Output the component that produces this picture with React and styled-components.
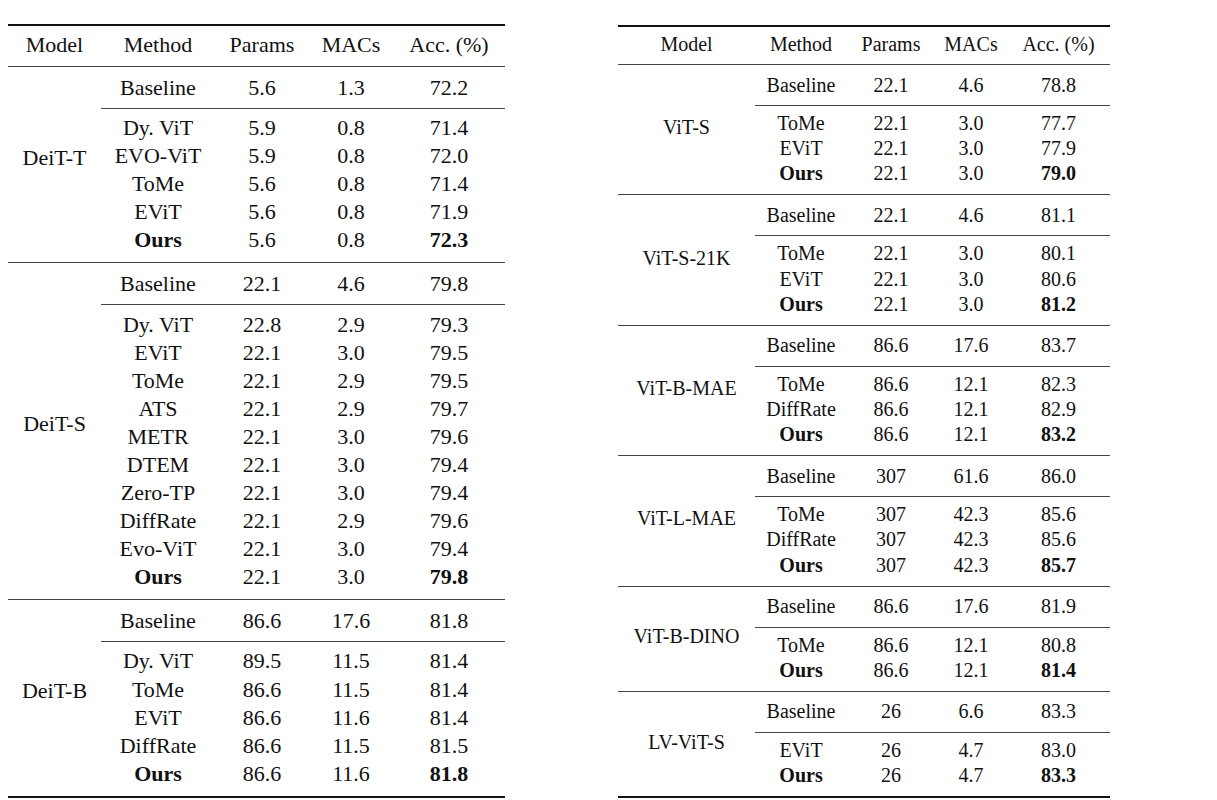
import React from 'react'
import styled, { createGlobalStyle } from 'styled-components'

const GlobalStyle = createGlobalStyle`
    body {
        margin: 0;
        background: #fff;
    }
`

const leftData = [
    {
        model: 'DeiT-T',
        base: ['Baseline', '5.6', '1.3', '72.2'],
        rows: [
            ['Dy. ViT', '5.9', '0.8', '71.4'],
            ['EVO-ViT', '5.9', '0.8', '72.0'],
            ['ToMe', '5.6', '0.8', '71.4'],
            ['EViT', '5.6', '0.8', '71.9'],
            ['Ours', '5.6', '0.8', '72.3'],
        ],
    },
    {
        model: 'DeiT-S',
        base: ['Baseline', '22.1', '4.6', '79.8'],
        rows: [
            ['Dy. ViT', '22.8', '2.9', '79.3'],
            ['EViT', '22.1', '3.0', '79.5'],
            ['ToMe', '22.1', '2.9', '79.5'],
            ['ATS', '22.1', '2.9', '79.7'],
            ['METR', '22.1', '3.0', '79.6'],
            ['DTEM', '22.1', '3.0', '79.4'],
            ['Zero-TP', '22.1', '3.0', '79.4'],
            ['DiffRate', '22.1', '2.9', '79.6'],
            ['Evo-ViT', '22.1', '3.0', '79.4'],
            ['Ours', '22.1', '3.0', '79.8'],
        ],
    },
    {
        model: 'DeiT-B',
        base: ['Baseline', '86.6', '17.6', '81.8'],
        rows: [
            ['Dy. ViT', '89.5', '11.5', '81.4'],
            ['ToMe', '86.6', '11.5', '81.4'],
            ['EViT', '86.6', '11.6', '81.4'],
            ['DiffRate', '86.6', '11.5', '81.5'],
            ['Ours', '86.6', '11.6', '81.8'],
        ],
    },
]

const rightData = [
    {
        model: 'ViT-S',
        base: ['Baseline', '22.1', '4.6', '78.8'],
        rows: [
            ['ToMe', '22.1', '3.0', '77.7'],
            ['EViT', '22.1', '3.0', '77.9'],
            ['Ours', '22.1', '3.0', '79.0'],
        ],
    },
    {
        model: 'ViT-S-21K',
        base: ['Baseline', '22.1', '4.6', '81.1'],
        rows: [
            ['ToMe', '22.1', '3.0', '80.1'],
            ['EViT', '22.1', '3.0', '80.6'],
            ['Ours', '22.1', '3.0', '81.2'],
        ],
    },
    {
        model: 'ViT-B-MAE',
        base: ['Baseline', '86.6', '17.6', '83.7'],
        rows: [
            ['ToMe', '86.6', '12.1', '82.3'],
            ['DiffRate', '86.6', '12.1', '82.9'],
            ['Ours', '86.6', '12.1', '83.2'],
        ],
    },
    {
        model: 'ViT-L-MAE',
        base: ['Baseline', '307', '61.6', '86.0'],
        rows: [
            ['ToMe', '307', '42.3', '85.6'],
            ['DiffRate', '307', '42.3', '85.6'],
            ['Ours', '307', '42.3', '85.7'],
        ],
    },
    {
        model: 'ViT-B-DINO',
        base: ['Baseline', '86.6', '17.6', '81.9'],
        rows: [
            ['ToMe', '86.6', '12.1', '80.8'],
            ['Ours', '86.6', '12.1', '81.4'],
        ],
    },
    {
        model: 'LV-ViT-S',
        base: ['Baseline', '26', '6.6', '83.3'],
        rows: [
            ['EViT', '26', '4.7', '83.0'],
            ['Ours', '26', '4.7', '83.3'],
        ],
    },
]

const leftCfg = { top: 24, cols: [93, 114, 94, 84, 112], font: 22, headH: 40, baseH: 41, rowH: 28.1, shift: 14 }
const rightCfg = { top: 25, cols: [137, 92, 88, 72, 103], font: 20, headH: 37, baseH: 40, rowH: 25.15, shift: 4 }

const ResultTable = ({ cfg, data }) => {
    const [modelW, ...rest] = cfg.cols
    const restCols = rest.map(c => c + 'px').join(' ')
    return (
        <Table $top={cfg.top} $font={cfg.font} $width={cfg.cols.reduce((a, b) => a + b, 0)}>
            <Head $cols={cfg.cols.map(c => c + 'px').join(' ')} $h={cfg.headH}>
                <span>Model</span>
                <span>Method</span>
                <span>Params</span>
                <span>MACs</span>
                <span>Acc. (%)</span>
            </Head>
            {data.map((group, gi) => (
                <Group key={group.model} $modelW={modelW} $first={gi === 0}>
                    <ModelCell $shift={cfg.shift}>{group.model}</ModelCell>
                    <div>
                        <Row $cols={restCols} $h={cfg.baseH}>
                            {group.base.map((v, i) => <Cell key={i}>{v}</Cell>)}
                        </Row>
                        <SubBlock>
                            {group.rows.map(r => {
                                const ours = r[0] === 'Ours'
                                return (
                                    <Row key={r[0]} $cols={restCols} $h={cfg.rowH}>
                                        <Cell $bold={ours}>{r[0]}</Cell>
                                        <Cell>{r[1]}</Cell>
                                        <Cell>{r[2]}</Cell>
                                        <Cell $bold={ours}>{r[3]}</Cell>
                                    </Row>
                                )
                            })}
                        </SubBlock>
                    </div>
                </Group>
            ))}
        </Table>
    )
}

export default function App() {
    return (
        <>
            <GlobalStyle />
            <Page>
                <ResultTable cfg={leftCfg} data={leftData} />
                <ResultTable cfg={rightCfg} data={rightData} />
            </Page>
        </>
    )
}

const Page = styled.div`
    display: flex;
    align-items: flex-start;
    gap: 113px;
    padding-left: 8px;
    width: 1217px;
    height: 800px;
    box-sizing: border-box;
    overflow: hidden;
    background: #fff;
`

const Table = styled.div`
    margin-top: ${p => p.$top}px;
    width: ${p => p.$width}px;
    font-family: "Liberation Serif", "Times New Roman", serif;
    font-size: ${p => p.$font}px;
    color: #111;
    border-top: 2px solid #111;
    border-bottom: 2px solid #111;
`

const Head = styled.div`
    display: grid;
    grid-template-columns: ${p => p.$cols};
    height: ${p => p.$h}px;
    align-items: center;
    text-align: center;
    border-bottom: 1.5px solid #444;
    span {
        padding-bottom: 2px;
    }
`

const Group = styled.div`
    display: grid;
    grid-template-columns: ${p => p.$modelW}px 1fr;
    border-top: ${p => (p.$first ? 'none' : '1.5px solid #444')};
`

const ModelCell = styled.div`
    display: flex;
    align-items: center;
    justify-content: center;
    padding-bottom: ${p => p.$shift}px;
    white-space: nowrap;
`

const Row = styled.div`
    display: grid;
    grid-template-columns: ${p => p.$cols};
    height: ${p => p.$h}px;
    align-items: center;
    text-align: center;
`

const SubBlock = styled.div`
    border-top: 1px solid #444;
    padding: 5px 0 8px;
`

const Cell = styled.span`
    font-weight: ${p => (p.$bold ? 700 : 400)};
    white-space: nowrap;
`
